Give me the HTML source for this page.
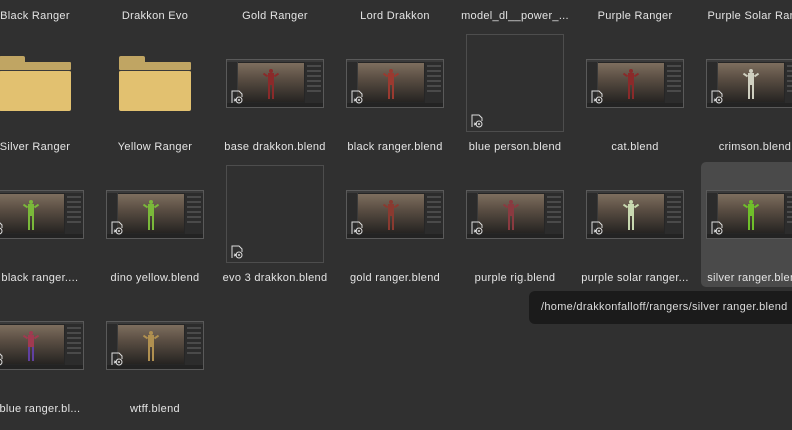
<!DOCTYPE html>
<html><head><meta charset="utf-8"><style>
html,body{margin:0;padding:0;}
body{width:792px;height:430px;background:#303030;position:relative;overflow:hidden;font-family:"Liberation Sans","DejaVu Sans",sans-serif;font-size:11px;letter-spacing:0.3px;color:#e4e4e4;}
.lbl{position:absolute;width:120px;text-align:center;white-space:nowrap;line-height:14px;}
.th{position:absolute;width:96px;height:47px;border:1px solid #5a5a5a;background:#262626;overflow:hidden;}
.th .lp{position:absolute;left:0;top:2px;width:10px;bottom:4px;background:#2b2b2b;border-right:1px solid #3a3a3a;}
.th .vp{position:absolute;left:11px;top:3px;width:66px;bottom:5px;background:linear-gradient(#7d6e5e,#5a4e43 40%,#262422);}
.th .rp{position:absolute;left:78px;top:2px;right:0;bottom:4px;background:#2c2c2c;}
.th .rp i{display:block;height:2px;margin:3px 2px;background:#4a4a4a;}
.th .bar{position:absolute;left:0;right:0;top:0;height:2px;background:#3a3a3a;}
.th .bot{position:absolute;left:0;right:0;bottom:0;height:4px;background:#232323;}
.fig{position:absolute;left:50%;top:6px;width:10px;height:32px;margin-left:-5px;}
.fig b{position:absolute;display:block;}
.fi{position:absolute;left:4px;bottom:3px;width:13px;height:14px;}
.empty{position:absolute;width:96px;height:96px;border:1px solid #4d4d4d;}
.fold{position:absolute;width:72px;height:55px;}
.fold .t{position:absolute;left:0;top:0;width:26px;height:8px;background:#c0a563;border-radius:2px 2px 0 0;}
.fold .b{position:absolute;left:0;top:6px;width:72px;height:8px;background:#c0a563;border-radius:1px;}
.fold .f{position:absolute;left:0;top:14px;width:72px;height:40px;background:#e2c170;border-radius:2px;border-top:1px solid #3a3a3a;}
.hl{position:absolute;left:701px;top:162px;width:100px;height:125px;background:#4a4a4a;border-radius:5px;}
.tip{position:absolute;left:529px;top:291px;width:280px;height:33px;background:#1b1b1b;border-radius:6px;line-height:33px;padding-left:12px;box-sizing:border-box;white-space:nowrap;color:#dcdcdc;}
</style></head><body>
<div class="hl"></div>
<div id="c"></div>
<div class="tip">/home/drakkonfalloff/rangers/silver ranger.blend</div>
<script>
var c=document.getElementById('c'),h='';
var fileIcon='<svg class="fi" viewBox="0 0 13 14"><path d="M1 13V1h7l3 3v3" fill="none" stroke="#ddd" stroke-width="1"/><circle cx="8" cy="10" r="3" fill="none" stroke="#ddd" stroke-width="1"/><circle cx="8" cy="10" r="1" fill="#ddd"/><path d="M3 9l3 1M3 11l2-1" stroke="#ddd"/></svg>';
function thumb(x,y,col,col2){
 var f='<div class="fig"><b style="left:3px;top:0;width:4px;height:4px;background:'+col+';border-radius:2px"></b><b style="left:2px;top:4px;width:6px;height:12px;background:'+col+'"></b><b style="left:-3px;top:5px;width:5px;height:2px;background:'+col+';transform:rotate(35deg)"></b><b style="left:8px;top:5px;width:5px;height:2px;background:'+col+';transform:rotate(-35deg)"></b><b style="left:2px;top:16px;width:2px;height:14px;background:'+(col2||col)+'"></b><b style="left:6px;top:16px;width:2px;height:14px;background:'+(col2||col)+'"></b></div>';
 var rp='<div class="rp">'+'<i></i>'.repeat(6)+'</div>';
 return '<div class="th" style="left:'+x+'px;top:'+y+'px"><div class="bar"></div><div class="lp"></div><div class="vp">'+f+'</div>'+rp+'<div class="bot"></div>'+fileIcon+'</div>';
}
function lbl(i,y,t){h+='<div class="lbl" style="left:'+(i*120-25)+'px;top:'+(y-6)+'px">'+t+'</div>';}
function empty(i,y){h+='<div class="empty" style="left:'+(i*120-14)+'px;top:'+y+'px">'+fileIcon+'</div>';}
function fold(i){h+='<div class="fold" style="left:'+(i*120-1)+'px;top:56px"><div class="t"></div><div class="b"></div><div class="f"></div></div>';}
var r0=['Black Ranger','Drakkon Evo','Gold Ranger','Lord Drakkon','model_dl__power_...','Purple Ranger','Purple Solar Rang'];
r0.forEach(function(t,i){lbl(i,15,t);});
fold(0);fold(1);
var r1=[[2,'base drakkon.blend','#8a2a2a'],[3,'black ranger.blend','#9a3a30'],[5,'cat.blend','#8a2a2a'],[6,'crimson.blend','#cfcfc0']];
r1.forEach(function(a){h+=thumb(a[0]*120-14,59,a[2]);});
empty(4,34);
['Silver Ranger','Yellow Ranger','base drakkon.blend','black ranger.blend','blue person.blend','cat.blend','crimson.blend'].forEach(function(t,i){lbl(i,146,t);});
var r2=[[0,'#7ab83a'],[1,'#7ab83a'],[3,'#8a3a30'],[4,'#8a3a40'],[5,'#c8d8b0'],[6,'#6fbf2a']];
r2.forEach(function(a){h+=thumb(a[0]*120-14,190,a[1]);});
empty(2,165);
['o black ranger....','dino yellow.blend','evo 3 drakkon.blend','gold ranger.blend','purple rig.blend','purple solar ranger...','silver ranger.blend'].forEach(function(t,i){lbl(i,277,t);});
h+=thumb(-14,321,'#a03a50','#6040a0');h+=thumb(106,321,'#b09050');
lbl(0,408,'ff blue ranger.bl...');lbl(1,408,'wtff.blend');
c.innerHTML=h;
</script>
</body></html>
